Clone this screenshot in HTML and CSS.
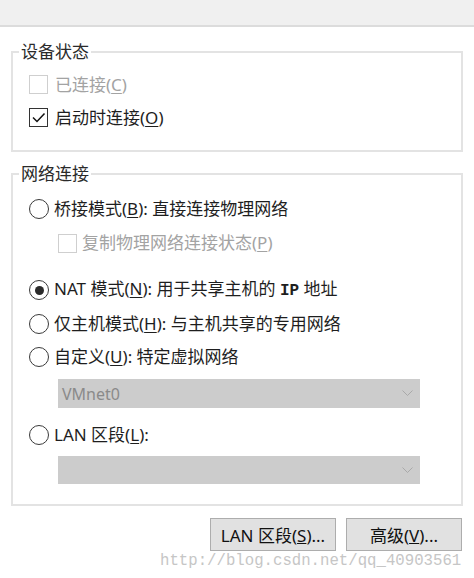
FILE: index.html
```html
<!DOCTYPE html>
<html lang="zh-CN">
<head>
<meta charset="utf-8">
<title>网络适配器</title>
<link rel="stylesheet" href="styles.css">
</head>
<body>
<div class="bar"></div>

<fieldset class="group g1">
  <legend>设备状态</legend>
  <div class="row disabled">
    <span class="cb"></span>
    <span class="lbl">已连接(<u>C</u>)</span>
  </div>
  <div class="row">
    <span class="cb on"><svg width="17" height="17" viewBox="0 0 17 17"><polyline points="3,8.5 7,12.5 14.5,4.5" fill="none" stroke="#111" stroke-width="1.5"/></svg></span>
    <span class="lbl">启动时连接(<u>O</u>)</span>
  </div>
</fieldset>

<fieldset class="group g2">
  <legend>网络连接</legend>
  <div class="row">
    <span class="rb"></span>
    <span class="lbl">桥接模式(<u>B</u>): 直接连接物理网络</span>
  </div>
  <div class="row sub disabled">
    <span class="cb"></span>
    <span class="lbl">复制物理网络连接状态(<u>P</u>)</span>
  </div>
  <div class="row gap">
    <span class="rb on"></span>
    <span class="lbl">NAT 模式(<u>N</u>): 用于共享主机的 <span class="ip">IP</span> 地址</span>
  </div>
  <div class="row short">
    <span class="rb"></span>
    <span class="lbl">仅主机模式(<u>H</u>): 与主机共享的专用网络</span>
  </div>
  <div class="row">
    <span class="rb"></span>
    <span class="lbl">自定义(<u>U</u>): 特定虚拟网络</span>
  </div>
  <div class="select s1">
    <span class="val">VMnet0</span>
    <svg class="chev" width="11" height="7" viewBox="0 0 11 7"><polyline points="0.5,0.5 5.5,5.5 10.5,0.5" fill="none" stroke="#a9a9a9" stroke-width="1"/></svg>
  </div>
  <div class="row lan">
    <span class="rb"></span>
    <span class="lbl">LAN 区段(<u>L</u>):</span>
  </div>
  <div class="select s2">
    <span class="val"></span>
    <svg class="chev" width="11" height="7" viewBox="0 0 11 7"><polyline points="0.5,0.5 5.5,5.5 10.5,0.5" fill="none" stroke="#a9a9a9" stroke-width="1"/></svg>
  </div>
</fieldset>

<div class="buttons">
  <button class="btn b-lan">LAN 区段(<u>S</u>)...</button>
  <button class="btn b-adv">高级(<u>V</u>)...</button>
</div>

<div class="watermark">http://blog.csdn.net/qq_40903561</div>
</body>
</html>
```

FILE: styles.css
```css
* { box-sizing: border-box; }

html, body {
  margin: 0;
  padding: 0;
  background: #ffffff;
}

body {
  position: relative;
  width: 474px;
  height: 578px;
  overflow: hidden;
  font-family: "Noto Sans", "Noto Sans CJK SC", sans-serif;
  font-size: 17px;
  color: #1e1e1e;
}

.bar {
  height: 27px;
  background: #f0f0f0;
  border-bottom: 2px solid #dcdcdc;
}

.group {
  margin: 0 11px;
  padding: 6px 0 16px 16px;
  border: 2px solid #e3e3e3;
  min-width: 0;
}

.g1 { margin-top: 15px; }
.g2 { margin-top: 12px; padding-top: 8px; padding-bottom: 20px; }

legend {
  margin-left: -10px;
  padding: 0 2px;
  line-height: 20px;
  height: 20px;
  color: #2a2a2a;
}

.row {
  display: flex;
  align-items: center;
  height: 33px;
  gap: 7px;
  white-space: nowrap;
}

.g2 .row { height: 34px; gap: 5px; }
.g2 .row.short { height: 33px; }
.g2 .row.gap { margin-top: 13px; }
.g2 .row.sub { padding-left: 29px; }
.g2 .row.lan { margin-top: 10px; }

.lbl { line-height: 20px; }
.lbl u { text-underline-offset: 2px; }

.disabled .lbl { color: #a3a3a3; }

.ip {
  font-family: "Liberation Mono", monospace;
  font-weight: 700;
  font-size: 16px;
}

.cb {
  width: 19px;
  height: 19px;
  flex: none;
  border: 1px solid #333333;
  background: #ffffff;
  display: flex;
  align-items: center;
  justify-content: center;
}

.disabled .cb { border-color: #cfcfcf; }

.rb {
  width: 20px;
  height: 20px;
  flex: none;
  border: 1px solid #3a3a3a;
  border-radius: 50%;
  background: #ffffff;
  display: flex;
  align-items: center;
  justify-content: center;
}

.rb.on::after {
  content: "";
  width: 9px;
  height: 9px;
  border-radius: 50%;
  background: #2b2b2b;
}

.select {
  display: flex;
  align-items: center;
  justify-content: space-between;
  margin-left: 29px;
  width: 362px;
  background: #cccccc;
  padding: 0 7px 0 4px;
}

.s1 { margin-top: 5px; height: 29px; }
.s2 { margin-top: 4px; height: 28px; }

.val {
  font-size: 16px;
  color: #8a8a8a;
}

.chev { flex: none; }

.buttons {
  display: flex;
  justify-content: flex-end;
  gap: 10px;
  margin: 12px 12px 0 0;
}

.btn {
  height: 33px;
  background: #e1e1e1;
  border: 1px solid #adadad;
  font-family: "Noto Sans", "Noto Sans CJK SC", sans-serif;
  font-size: 17px;
  color: #111111;
  padding: 0;
}

.b-lan { width: 126px; }
.b-adv { width: 116px; }

.watermark {
  position: absolute;
  left: 160px;
  top: 552px;
  font-family: "Liberation Mono", monospace;
  font-size: 15.7px;
  line-height: 18px;
  color: #c6c6c6;
  white-space: nowrap;
}
```
